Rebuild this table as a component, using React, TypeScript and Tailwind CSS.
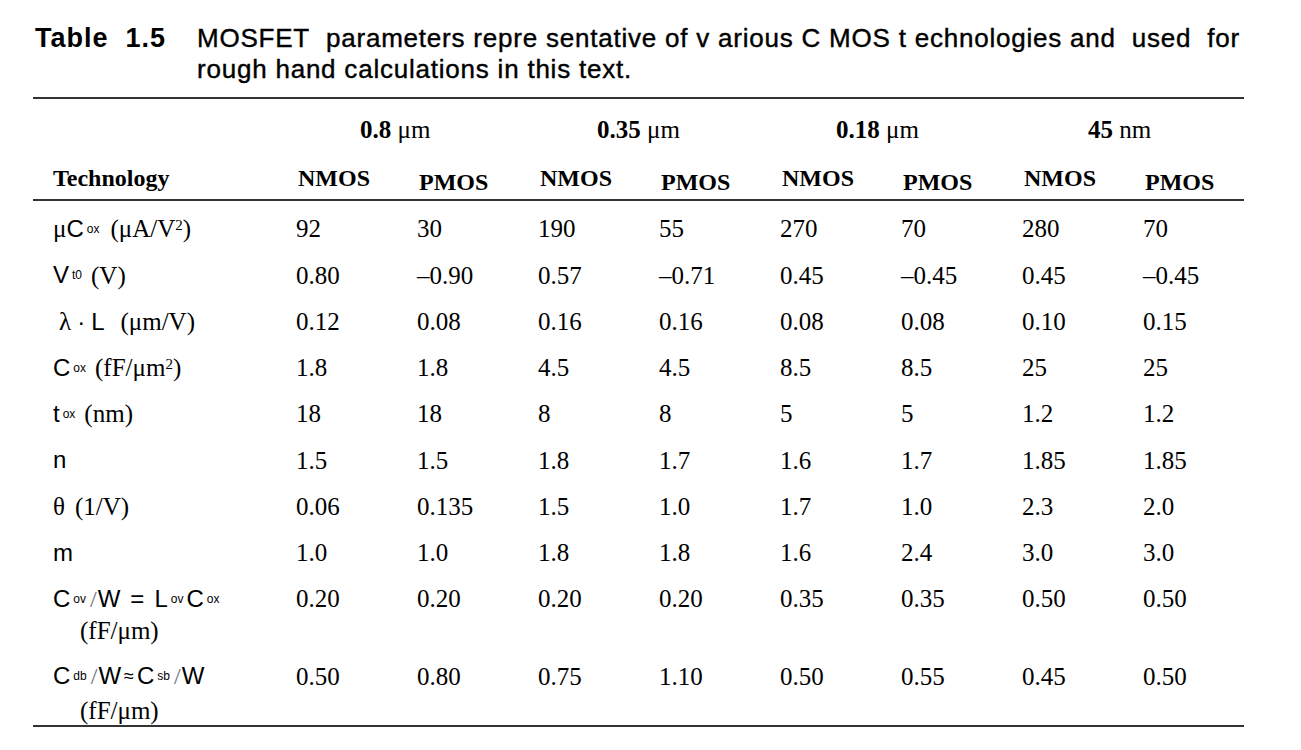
import React from "react";

const serif = "font-['Liberation_Serif','Times_New_Roman',serif]";
const sans = "font-['Liberation_Sans',Arial,sans-serif]";

const gridCols =
  "grid grid-cols-[263px_121px_121px_121px_121px_121px_121px_121px_1fr]";

function Sub({ children }: { children: React.ReactNode }) {
  return (
    <span className={`${sans} text-[12px] align-[-5px] px-[3px]`}>{children}</span>
  );
}

function Sr({ children }: { children: React.ReactNode }) {
  return <span className={`${serif} text-[25px]`}>{children}</span>;
}

function Slash() {
  return <span className={`${serif} text-gray-500 mx-[1px] font-light`}>/</span>;
}

type Row = {
  label: React.ReactNode;
  second?: string;
  values: string[];
};

const rows: Row[] = [
  {
    label: (
      <>
        <Sr>μ</Sr>C<Sub>ox</Sub>
        <span className="ml-[8px]" />
        <Sr>
          (μA/V<span className="text-[15px] align-[7px]">2</span>)
        </Sr>
      </>
    ),
    values: ["92", "30", "190", "55", "270", "70", "280", "70"],
  },
  {
    label: (
      <>
        V<Sub>t0</Sub>
        <span className="ml-[6px]" />
        <Sr>(V)</Sr>
      </>
    ),
    values: ["0.80", "–0.90", "0.57", "–0.71", "0.45", "–0.45", "0.45", "–0.45"],
  },
  {
    label: (
      <>
        <span className="ml-[6px]" />
        <Sr>λ</Sr>
        <span className="mx-[6px]">·</span>L
        <span className="ml-[16px]" />
        <Sr>(μm/V)</Sr>
      </>
    ),
    values: ["0.12", "0.08", "0.16", "0.16", "0.08", "0.08", "0.10", "0.15"],
  },
  {
    label: (
      <>
        C<Sub>ox</Sub>
        <span className="ml-[6px]" />
        <Sr>
          (fF/μm<span className="text-[15px] align-[7px]">2</span>)
        </Sr>
      </>
    ),
    values: ["1.8", "1.8", "4.5", "4.5", "8.5", "8.5", "25", "25"],
  },
  {
    label: (
      <>
        t<Sub>ox</Sub>
        <span className="ml-[6px]" />
        <Sr>(nm)</Sr>
      </>
    ),
    values: ["18", "18", "8", "8", "5", "5", "1.2", "1.2"],
  },
  {
    label: <>n</>,
    values: ["1.5", "1.5", "1.8", "1.7", "1.6", "1.7", "1.85", "1.85"],
  },
  {
    label: (
      <>
        <Sr>θ</Sr>
        <span className="ml-[10px]" />
        <Sr>(1/V)</Sr>
      </>
    ),
    values: ["0.06", "0.135", "1.5", "1.0", "1.7", "1.0", "2.3", "2.0"],
  },
  {
    label: <>m</>,
    values: ["1.0", "1.0", "1.8", "1.8", "1.6", "2.4", "3.0", "3.0"],
  },
  {
    label: (
      <>
        C<Sub>ov</Sub>
        <Slash />W
        <span className="mx-[10px]">=</span>L<Sub>ov</Sub>C<Sub>ox</Sub>
      </>
    ),
    second: "(fF/μm)",
    values: ["0.20", "0.20", "0.20", "0.20", "0.35", "0.35", "0.50", "0.50"],
  },
  {
    label: (
      <>
        C<Sub>db</Sub>
        <Slash />W
        <span className="mx-[3px] text-[18px]">≈</span>C<Sub>sb</Sub>
        <Slash />W
      </>
    ),
    second: "(fF/μm)",
    values: ["0.50", "0.80", "0.75", "1.10", "0.50", "0.55", "0.45", "0.50"],
  },
];

const groups = [
  { num: "0.8", unit: "μm", pad: "pl-[64px]" },
  { num: "0.35", unit: "μm", pad: "pl-[59px]" },
  { num: "0.18", unit: "μm", pad: "pl-[56px]" },
  { num: "45", unit: "nm", pad: "pl-[66px]" },
];

export default function App() {
  return (
    <div className="w-[1301px] h-[750px] bg-white text-black overflow-hidden">
      {/* caption */}
      <div className={`${sans} flex pt-[23px] pl-[35px] text-[26px] leading-[31px]`}>
        <div className="w-[162px] shrink-0 font-bold text-[27px] tracking-[1px]">Table&nbsp; 1.5</div>
        <div className="w-[1060px] tracking-[0.78px] [-webkit-text-stroke:0.4px_black]">
          MOSFET&nbsp; parameters repre sentative of v arious C MOS t echnologies and&nbsp; used&nbsp; for
          <br />
          rough hand calculations in this text.
        </div>
      </div>

      <div className="ml-[33px] w-[1211px] mt-[12px]">
        <div className="h-[2px] bg-[#333]" />

        {/* column groups */}
        <div className={`${gridCols} ${serif} text-[25px] h-[58px] items-center pt-[4px]`}>
          <div />
          {groups.map((g) => (
            <div key={g.num} className={`col-span-2 ${g.pad}`}>
              <span className="font-bold">{g.num}</span> <span>{g.unit}</span>
            </div>
          ))}
        </div>

        <div className={`${gridCols} ${serif} text-[24px] font-bold h-[42px]`}>
          <div className="pl-[20px] pt-[3px]">Technology</div>
          {[0, 1, 2, 3, 4, 5, 6, 7].map((i) => (
            <div key={i} className={i % 2 === 0 ? "pt-[3px] pl-[2px]" : "pt-[7px] pl-[2px]"}>
              {i % 2 === 0 ? "NMOS" : "PMOS"}
            </div>
          ))}
        </div>

        <div className="h-[2px] bg-[#333]" />

        <div className="pt-[5px]">
          {rows.map((r, idx) => (
            <div
              key={idx}
              className={`${gridCols} ${r.second && idx === 8 ? "pb-[10px]" : ""}`}
            >
              <div className={`${sans} text-[24px] pl-[20px]`}>
                <div className="h-[46.25px] flex items-center whitespace-nowrap">{r.label}</div>
                {r.second && (
                  <div
                    className={`${serif} text-[25px] h-[24px] leading-[24px] pl-[27px] ${
                      idx === 8 ? "-mt-[3px]" : "-mt-[1px]"
                    }`}
                  >
                    {r.second}
                  </div>
                )}
              </div>
              {r.values.map((v, j) => (
                <div
                  key={j}
                  className={`${serif} text-[25px] h-[46.25px] flex items-center`}
                >
                  {v}
                </div>
              ))}
            </div>
          ))}
        </div>

        <div className="h-[2px] bg-[#333] mt-[2px]" />
      </div>
    </div>
  );
}
